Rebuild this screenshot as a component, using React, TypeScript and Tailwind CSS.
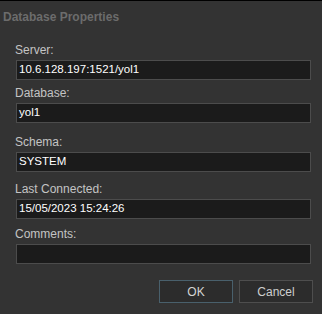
import React from 'react';

const fields = [
  { label: 'Server:', value: '10.6.128.197:1521/yol1', mt: 'mt-[10px]' },
  { label: 'Database:', value: 'yol1', mt: 'mt-[5px]' },
  { label: 'Schema:', value: 'SYSTEM', mt: 'mt-[11px]' },
  { label: 'Last Connected:', value: '15/05/2023 15:24:26', mt: 'mt-[9px]' },
  { label: 'Comments:', value: '', mt: 'mt-[7px]' },
];

export default function App() {
  return (
    <div className="w-[322px] h-[314px] bg-[#333333] border-t border-black font-['Liberation_Sans',Arial,sans-serif] flex flex-col">
      <div className="h-[31px] flex items-center pl-[3px] text-[12px] font-bold text-[#6c6c6c]">
        Database Properties
      </div>
      <div className="flex flex-col pl-[16px] pr-[11px]">
        {fields.map((f) => (
          <div key={f.label} className={`flex flex-col ${f.mt}`}>
            <div className="h-[16px] leading-[16px] text-[12px] text-[#c4c4c4] -ml-[1px]">{f.label}</div>
            <div className="mt-[2px] h-[20px] bg-[#1b1b1b] border border-[#4c4c4c] px-[2px] flex items-center text-[11.5px] text-white">
              {f.value}
            </div>
          </div>
        ))}
      </div>
      <div className="flex justify-end gap-[6px] pr-[9px] mt-[16px]">
        <button className="w-[74px] h-[23px] bg-[#2c2c2c] border border-[#49606c] text-[12px] text-[#d4d4d4] flex items-center justify-center">
          OK
        </button>
        <button className="w-[74px] h-[23px] bg-[#2c2c2c] border border-[#4e4e4e] text-[12px] text-[#cfcfcf] flex items-center justify-center">
          Cancel
        </button>
      </div>
    </div>
  );
}
